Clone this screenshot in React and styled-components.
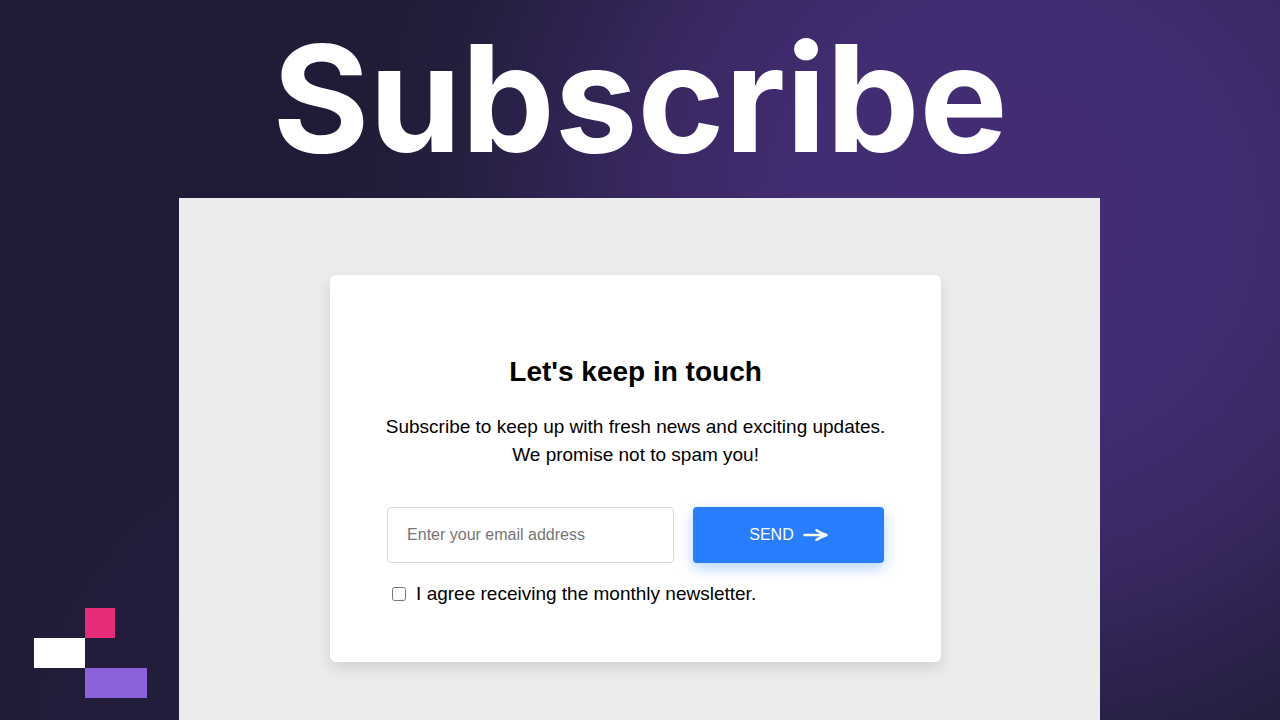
import React from "react";
import { useState } from "react";
import styled, { createGlobalStyle } from "styled-components";

const GlobalStyle = createGlobalStyle`
    * {
        box-sizing: border-box;
    }

    body {
        margin: 0;
        font-family: "Liberation Sans", Arial, sans-serif;
    }
`;

const PageContainer = styled.div`
    display: grid;
    grid-template-columns: 14% 1fr 180px;
    grid-template-rows: auto 1fr;
    min-height: 100vh;
    background-color: #201b36;
    background-image:
        radial-gradient(circle 34vw at 28% 106%, #261f42 0%, #261f4200 100%),
        radial-gradient(ellipse 52% 92% at 79% 30%, #432c74 0%, #422c72 32%, #3a2862 54%, #2e2350 70%, #241e3d 86%, #201b36 100%);
`;

const Title = styled.h1`
    grid-column: 1 / -1;
    margin: 0;
    padding: 8px 0;
    font-family: Inter, sans-serif;
    font-size: 148px;
    font-weight: 700;
    line-height: 182px;
    text-align: center;
    color: white;
`;

const LogoColumn = styled.div`
    display: flex;
    align-items: flex-end;
    padding: 0 32px 22px 34px;
`;

const Logo = styled.svg`
    flex: none;
    display: block;
    width: 113px;
    height: 90px;
`;

const Panel = styled.main`
    display: flex;
    justify-content: center;
    align-items: flex-start;
    padding: 77px 8px 56px 0;
    background-color: #ececec;
`;

const Card = styled.section`
    width: 100%;
    max-width: 611px;
    padding: 56px 48px;
    background-color: white;
    border-radius: 6px;
    box-shadow: 0 6px 14px rgba(0, 0, 0, 0.12);
    color: black;
`;

const Heading = styled.h2`
    margin: 24px 0;
    font-size: 28px;
    line-height: 34px;
    text-align: center;
`;

const Text = styled.p`
    margin: 0 0 38px;
    font-size: 19px;
    line-height: 28px;
    text-align: center;
`;

const Form = styled.form`
    display: grid;
    grid-template-columns: 3fr 2fr;
    gap: 19px;
    padding: 0 9px;
`;

const Input = styled.input`
    min-width: 0;
    height: 56px;
    padding: 0 19px;
    border: 1px solid #d8d8d8;
    border-radius: 4px;
    background-color: white;
    font-family: inherit;
    font-size: 16px;

    &::placeholder {
        color: #757575;
    }
`;

const Button = styled.button`
    display: flex;
    justify-content: center;
    align-items: center;
    gap: 9px;
    height: 56px;
    padding: 0;
    border: none;
    border-radius: 4px;
    background-color: #287eff;
    box-shadow: 0 5px 14px rgba(40, 126, 255, 0.35);
    font-family: inherit;
    font-size: 16px;
    color: white;
    cursor: pointer;
`;

const Label = styled.label`
    display: flex;
    grid-column: 1 / -1;
    align-items: center;
    gap: 10px;
    padding-left: 5px;
    font-size: 19px;
    line-height: 24px;
`;

const Checkbox = styled.input`
    width: 14px;
    height: 14px;
    margin: 0;
`;

const App = () => {
    const [email, setEmail] = useState("");
    const [agreed, setAgreed] = useState(false);

    const handleSubmit = (e) => {
        e.preventDefault();
    }

    return (
        <PageContainer>
            <GlobalStyle />
            <Title>Subscribe</Title>
            <LogoColumn>
                <Logo viewBox="0 0 113 90" aria-hidden="true">
                    <rect x="51" y="0" width="30" height="30" fill="#e62c78" />
                    <rect x="0" y="30" width="51" height="30" fill="white" />
                    <rect x="51" y="60" width="62" height="30" fill="#8b62dc" />
                </Logo>
            </LogoColumn>
            <Panel>
                <Card>
                    <Heading>Let's keep in touch</Heading>
                    <Text>
                        Subscribe to keep up with fresh news and exciting updates.
                        <br />
                        We promise not to spam you!
                    </Text>
                    <Form onSubmit={handleSubmit}>
                        <Input
                            type="email"
                            aria-label="Email address"
                            placeholder="Enter your email address"
                            value={email}
                            onChange={(e) => setEmail(e.target.value)}
                        />
                        <Button type="submit">
                            SEND
                            <svg width="25" height="14" viewBox="0 0 25 14" fill="none" stroke="white" strokeWidth="2.4" strokeLinecap="round" strokeLinejoin="round" aria-hidden="true">
                                <path d="M1.5 7H23M13.5 2.2Q17.5 5 23.5 7Q17.5 9 13.5 11.8" />
                            </svg>
                        </Button>
                        <Label>
                            <Checkbox
                                type="checkbox"
                                checked={agreed}
                                onChange={(e) => setAgreed(e.target.checked)}
                            />
                            I agree receiving the monthly newsletter.
                        </Label>
                    </Form>
                </Card>
            </Panel>
        </PageContainer>
    );
}

export default App;
